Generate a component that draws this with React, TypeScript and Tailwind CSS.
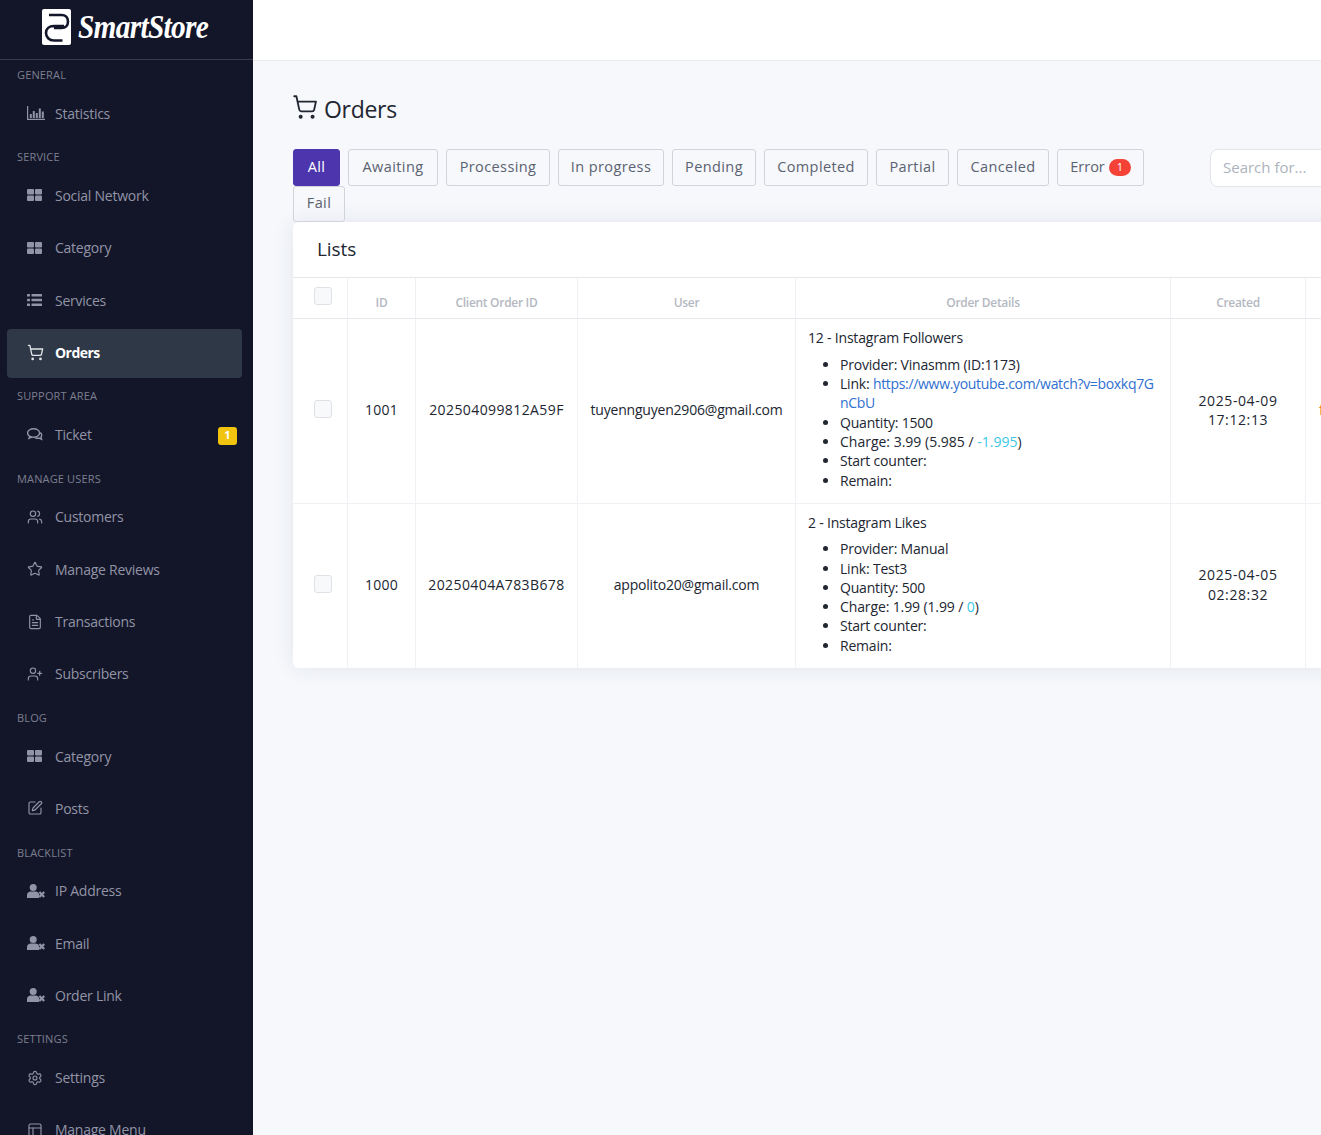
import React from "react";
import { ShoppingCart, Users, Star, FileText, UserPlus, SquarePen, Settings, PanelsTopLeft } from "lucide-react";

function BarIcon() {
  return (
    <svg width="18" height="14" viewBox="0 0 18 14" fill="none">
      <path d="M.6 0v13.300H18" stroke="currentColor" strokeWidth="1.2" />
      <path d="M3.800 8v4M6.800 5v7M9.800 7v5M12.800 2.500v9.500M15.800 5.500v6.500" stroke="currentColor" strokeWidth="2" />
    </svg>
  );
}
function GridIcon() {
  return (
    <svg width="15" height="12" viewBox="0 0 15 12" fill="currentColor">
      <rect width="7" height="5.500" rx="1" />
      <rect x="8" width="7" height="5.500" rx="1" />
      <rect y="6.500" width="7" height="5.500" rx="1" />
      <rect x="8" y="6.500" width="7" height="5.500" rx="1" />
    </svg>
  );
}
function ListIcon() {
  return (
    <svg width="15" height="12" viewBox="0 0 15 12" fill="currentColor">
      <rect width="3" height="2.600" rx=".5" />
      <rect x="4.500" width="10.500" height="2.600" rx=".5" />
      <rect y="4.700" width="3" height="2.600" rx=".5" />
      <rect x="4.500" y="4.700" width="10.500" height="2.600" rx=".5" />
      <rect y="9.400" width="3" height="2.600" rx=".5" />
      <rect x="4.500" y="9.400" width="10.500" height="2.600" rx=".5" />
    </svg>
  );
}
function ChatIcon() {
  return (
    <svg width="16" height="13" viewBox="0 0 16 13" fill="none" stroke="currentColor" strokeWidth="1.4">
      <ellipse cx="6.600" cy="5" rx="6" ry="4.200" />
      <path d="M2.800 8.200 2 10.200 5 9M13.200 4.600c1.600 1 2 3 .8 4.400l.6 2.200-2.600-1.100c-1.400.4-2.800.2-3.800-.5" />
    </svg>
  );
}
function UserXIcon() {
  return (
    <svg width="18" height="14" viewBox="0 0 18 14" fill="currentColor">
      <circle cx="6.200" cy="3.500" r="3.500" />
      <path d="M0 14v-3C0 8.800 1.800 7.600 4 7.600h4.400c2 0 3.400 1.200 3.800 3V14H0Z" />
      <path d="m12.400 8 4.800 5M17.200 8l-4.800 5" stroke="currentColor" strokeWidth="2.200" />
    </svg>
  );
}

type Item = { label: string; icon: React.ReactNode; active?: boolean; badge?: string };
type Section = { title: string; items: Item[] };

const sw = { size: 16, strokeWidth: 1.7 };
const sections: Section[] = [
  { title: "General", items: [{ label: "Statistics", icon: <BarIcon /> }] },
  {
    title: "Service",
    items: [
      { label: "Social Network", icon: <GridIcon /> },
      { label: "Category", icon: <GridIcon /> },
      { label: "Services", icon: <ListIcon /> },
      { label: "Orders", icon: <ShoppingCart size={17} strokeWidth={1.8} />, active: true },
    ],
  },
  { title: "Support Area", items: [{ label: "Ticket", icon: <ChatIcon />, badge: "1" }] },
  {
    title: "Manage Users",
    items: [
      { label: "Customers", icon: <Users {...sw} /> },
      { label: "Manage Reviews", icon: <Star {...sw} /> },
      { label: "Transactions", icon: <FileText {...sw} /> },
      { label: "Subscribers", icon: <UserPlus {...sw} /> },
    ],
  },
  {
    title: "Blog",
    items: [
      { label: "Category", icon: <GridIcon /> },
      { label: "Posts", icon: <SquarePen {...sw} /> },
    ],
  },
  {
    title: "Blacklist",
    items: [
      { label: "IP Address", icon: <UserXIcon /> },
      { label: "Email", icon: <UserXIcon /> },
      { label: "Order Link", icon: <UserXIcon /> },
    ],
  },
  {
    title: "Settings",
    items: [
      { label: "Settings", icon: <Settings {...sw} /> },
      { label: "Manage Menu", icon: <PanelsTopLeft {...sw} /> },
    ],
  },
];

const tabs = [
  { t: "All", c: "w-[47px] bg-[#4d35ae] border-[#4d35ae] text-white font-medium" },
  { t: "Awaiting", c: "w-[90px] border-[#d1d4da] text-[#5b6270]" },
  { t: "Processing", c: "w-[104px] border-[#d1d4da] text-[#5b6270]" },
  { t: "In progress", c: "w-[106px] border-[#d1d4da] text-[#5b6270]" },
  { t: "Pending", c: "w-[84px] border-[#d1d4da] text-[#5b6270]" },
  { t: "Completed", c: "w-[104px] border-[#d1d4da] text-[#5b6270]" },
  { t: "Partial", c: "w-[73px] border-[#d1d4da] text-[#5b6270]" },
  { t: "Canceled", c: "w-[92px] border-[#d1d4da] text-[#5b6270]" },
  { t: "Error", c: "w-[87px] border-[#d1d4da] text-[#5b6270]" },
  { t: "Fail", c: "w-[52px] border-[#d1d4da] text-[#5b6270]" },
];

function Sidebar() {
  return (
    <aside className="w-[253px] shrink-0 bg-[#131629] h-[1135px] overflow-hidden">
      <div className="h-[60px] border-b border-[#3a3c4c] flex items-start pt-[9px] pl-[42px] gap-[7px]">
        <svg width="29" height="36" viewBox="0 0 29 36" className="shrink-0">
          <rect width="29" height="36" rx="2" fill="#fff" />
          <path d="M7 6h12.500c4 0 6.500 2.500 6.500 6.500S23.500 19 19.500 19H12M20.500 31.500H12c-5 0-8-3.500-8-7.500S7 17 12 17h10" fill="none" stroke="#131629" strokeWidth="2.600" />
        </svg>
        <span className="mt-[2px] font-['Liberation_Serif',serif] italic font-bold text-[33px] leading-none text-white tracking-[-0.8px] scale-x-[0.89] origin-left whitespace-nowrap">SmartStore</span>
      </div>
      {sections.map((s, i) => (
        <div key={s.title + i}>
          <div className={i === 0 ? "h-[28px] pt-[8px] pl-[17px] text-[11px] leading-[14px] uppercase tracking-[0.15px] text-[#7d7f90]" : "h-[30px] pt-[10px] pl-[17px] text-[11px] leading-[14px] uppercase tracking-[0.15px] text-[#7d7f90]"}>
            {s.title}
          </div>
          {s.items.map((it) => (
            <div key={it.label} className="h-[52.300px] py-[1.500px] pl-[7px] pr-[11px]">
              <div className={it.active ? "h-full rounded-[4px] bg-[#2e3847] flex items-center pb-[2px] pl-[20px] pr-[5px] text-white font-bold" : "h-full flex items-center pb-[2px] pl-[20px] pr-[5px] text-[#9294a6]"}>
                <span className={it.active ? "w-[28px] shrink-0 text-[#e4e5ea] flex" : "w-[28px] shrink-0 flex"}>{it.icon}</span>
                <span className={it.active ? "text-[14px] tracking-[-0.55px] whitespace-nowrap" : "text-[14px] tracking-[-0.25px] whitespace-nowrap"}>{it.label}</span>
                {it.badge && (
                  <span className="ml-auto mt-[2px] w-[19px] h-[18px] rounded-[3px] bg-[#f1c40f] text-white text-[11px] font-bold flex items-center justify-center">{it.badge}</span>
                )}
              </div>
            </div>
          ))}
        </div>
      ))}
    </aside>
  );
}

const th = "border-l border-[#eff0f3] first:border-l-0 border-b border-b-[#e5e7eb] align-bottom pb-[7px] text-center text-[12px] font-semibold text-[#b4b8c2] leading-[16px] tracking-[-0.3px]";
const td = "border-l border-[#f0f1f4] first:border-l-0 text-center align-middle text-[14px] text-[#212631] tracking-[-0.2px]";
const rowLine = " border-b border-b-[#f0f1f4]";

function Box() {
  return <span className="block w-[18px] h-[18px] rounded-[3px] border border-[#dfe1e6] bg-[#f8f9fb] ml-[21px]" />;
}

function Details({ title, lines, first }: { title: string; lines: React.ReactNode[]; first?: boolean }) {
  return (
    <td className={first ? "border-l border-[#f0f1f4] border-b border-b-[#f0f1f4] align-top pl-[12px] pr-[13px] pt-[9px] text-[14px] leading-[19.300px] text-[#212631] tracking-[-0.2px]" : "border-l border-[#f0f1f4] align-top pl-[12px] pr-[13px] pt-[9px] text-[14px] leading-[19.300px] text-[#212631] tracking-[-0.2px]"}>
      <div className={first ? "mb-[7.600px] font-medium" : "mb-[7px] font-medium"}>{title}</div>
      <ul className="list-disc pl-[32px] break-all">
        {lines.map((l, i) => (
          <li key={i}>{l}</li>
        ))}
      </ul>
    </td>
  );
}

function Table() {
  return (
    <table className="border-separate border-spacing-0 table-fixed w-[1200px] font-['Open_Sans',sans-serif]">
      <colgroup>
        <col className="w-[54px]" />
        <col className="w-[68px]" />
        <col className="w-[162px]" />
        <col className="w-[218px]" />
        <col className="w-[375px]" />
        <col className="w-[135px]" />
        <col className="w-[188px]" />
      </colgroup>
      <thead>
        <tr className="h-[41px]">
          <th className={th}>
            <div className="pb-[6px]"><Box /></div>
          </th>
          <th className={th}>ID</th>
          <th className={th}>Client Order ID</th>
          <th className={th}>User</th>
          <th className={th}>Order Details</th>
          <th className={th}>Created</th>
          <th className={th}>Status</th>
        </tr>
      </thead>
      <tbody>
        <tr className="h-[185px]">
          <td className={td + rowLine + " pb-[4px]"}><div className="-mt-[1px]"><Box /></div></td>
          <td className={td + rowLine + " pb-[4px] tracking-[0.3px]"}>1001</td>
          <td className={td + rowLine + " pb-[4px] font-medium tracking-[0.4px]"}>202504099812A59F</td>
          <td className={td + rowLine + " pb-[4px]"}>tuyennguyen2906@gmail.com</td>
          <Details
            first
            title="12 - Instagram Followers"
            lines={[
              "Provider: Vinasmm (ID:1173)",
              <>Link: <span className="text-[#2f6fd0] tracking-[-0.32px]">https://www.youtube.com/watch?v=boxkq7GnCbU</span></>,
              "Quantity: 1500",
              <span className="tracking-[0px]">Charge: 3.99 (5.985 / <span className="text-[#3cc8e6]">-1.995</span>)</span>,
              "Start counter:",
              "Remain:",
            ]}
          />
          <td className={td + rowLine + " pb-[2px] leading-[19.500px] tracking-[0.6px]"}>2025-04-09<br />17:12:13</td>
          <td className={td + rowLine + " pb-[4px] text-left pl-[13px] text-[#f97316]"}>fail</td>
        </tr>
        <tr className="h-[164px]">
          <td className={td + " pb-[4px]"}><Box /></td>
          <td className={td + " pb-[4px] tracking-[0.3px]"}>1000</td>
          <td className={td + " pb-[4px] font-medium tracking-[0.4px]"}>20250404A783B678</td>
          <td className={td + " pb-[4px]"}>appolito20@gmail.com</td>
          <Details
            title="2 - Instagram Likes"
            lines={[
              "Provider: Manual",
              "Link: Test3",
              "Quantity: 500",
              <span className="tracking-[-0.12px]">Charge: 1.99 (1.99 / <span className="text-[#3cc8e6]">0</span>)</span>,
              "Start counter:",
              "Remain:",
            ]}
          />
          <td className={td + " pb-[3px] leading-[19.500px] tracking-[0.6px]"}>2025-04-05<br />02:28:32</td>
          <td className={td}></td>
        </tr>
      </tbody>
    </table>
  );
}

export default function App() {
  return (
    <div className="flex w-[1321px] h-[1135px] overflow-hidden bg-[#f6f8fc] font-['Open_Sans',sans-serif]">
      <Sidebar />
      <main className="flex-1 min-w-0 overflow-hidden">
        <div className="h-[61px] bg-white border-b border-[#e8eaef]" />
        <div className="pl-[40px] w-[1300px]">
          <div className="flex items-center h-[24px] mt-[36px] text-[#212631]">
            <ShoppingCart size={26} strokeWidth={1.7} className="-mt-[5px] -ml-[1px]" />
            <h1 className="ml-[6px] text-[23px] tracking-[-0.3px]">Orders</h1>
          </div>
          <div className="mt-[28px] flex items-start">
            <div className="w-[900px] mr-[17px] flex flex-wrap gap-x-[8px]">
              {tabs.map(({ t, c }, i) => (
                <button
                  key={t}
                  className={
                    i === 9
                      ? "h-[36px] pb-[2px] rounded-[3px] border flex items-center justify-center text-[14.500px] tracking-[0.4px] " + c
                      : "h-[37px] pb-[2px] rounded-[3px] border flex items-center justify-center text-[14.500px] " + (t === "Error" ? "gap-[4px] " : "tracking-[0.4px] ") + c
                  }
                >
                  {t}
                  {t === "Error" && (
                    <span className="w-[22px] h-[17px] mt-[2px] rounded-full bg-[#f44236] text-white text-[11px] flex items-center justify-center">1</span>
                  )}
                </button>
              ))}
            </div>
            <div className="w-[200px] h-[38px] pb-[2px] bg-white border border-[#e3e5ea] rounded-[8px] pl-[12px] flex items-center text-[15px] text-[#adb3bd]">Search for...</div>
          </div>
          <div className="bg-white rounded-[6px] shadow-[0_0_22px_rgba(30,40,70,0.09)] overflow-hidden w-[1200px]">
            <div className="h-[56px] border-b border-[#e5e7eb] flex items-center pl-[24px] text-[19px] text-[#212631] tracking-[-0.05px]">Lists</div>
            <Table />
          </div>
        </div>
      </main>
    </div>
  );
}
